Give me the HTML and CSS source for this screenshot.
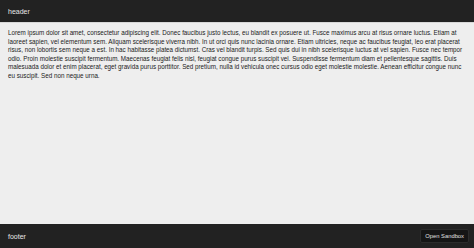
FILE: index.html
```html
<!DOCTYPE html>
<html>
<head>
<meta charset="utf-8">
<link rel="stylesheet" href="styles.css">
</head>
<body>
<div class="page">
  <header class="header">header</header>
  <main class="main">
    <p class="text">Lorem ipsum dolor sit amet, consectetur adipiscing elit. Donec faucibus justo lectus, eu blandit ex posuere ut. Fusce maximus arcu at risus ornare luctus. Etiam at laoreet sapien, vel elementum sem. Aliquam scelerisque viverra nibh. In ut orci quis nunc lacinia ornare. Etiam ultricies, neque ac faucibus feugiat, leo erat placerat risus, non lobortis sem neque a est. In hac habitasse platea dictumst. Cras vel blandit turpis. Sed quis dui in nibh scelerisque luctus at vel sapien. Fusce nec tempor odio. Proin molestie suscipit fermentum. Maecenas feugiat felis nisl, feugiat congue purus suscipit vel. Suspendisse fermentum diam et pellentesque sagittis. Duis malesuada dolor et enim placerat, eget gravida purus porttitor. Sed pretium, nulla id vehicula onec cursus odio eget molestie molestie. Aenean efficitur congue nunc eu suscipit. Sed non neque urna.</p>
  </main>
  <footer class="footer">
    <span>footer</span>
    <span class="sandbox">Open Sandbox</span>
  </footer>
</div>
</body>
</html>
```

FILE: styles.css
```css
html, body {
  margin: 0;
  padding: 0;
}
body {
  font-family: "Liberation Sans", Arial, sans-serif;
  background: #eeeeee;
  -webkit-font-smoothing: antialiased;
}
.page {
  display: flex;
  flex-direction: column;
  height: 248px;
}
.header {
  height: 22px;
  background: #222222;
  color: #e8e8e8;
  font-size: 7px;
  display: flex;
  align-items: center;
  padding: 0 8px;
  border-bottom: 1px solid #d8d8d8;
}
.main {
  flex: 1;
  background: #eeeeee;
  padding: 6px 8px 0;
}
.text {
  margin: 0;
  font-size: 6.28px;
  line-height: 8.5px;
  color: #1a1a1a;
}
.footer {
  height: 24px;
  background: #222222;
  color: #e8e8e8;
  font-size: 7px;
  display: flex;
  align-items: center;
  justify-content: space-between;
  padding: 0 5px 0 8px;
}
.sandbox {
  background: #151515;
  border: 1px solid #2c2c2c;
  border-radius: 2px;
  padding: 3px 4px;
  font-size: 5.8px;
  color: #e0e0e0;
}
```
